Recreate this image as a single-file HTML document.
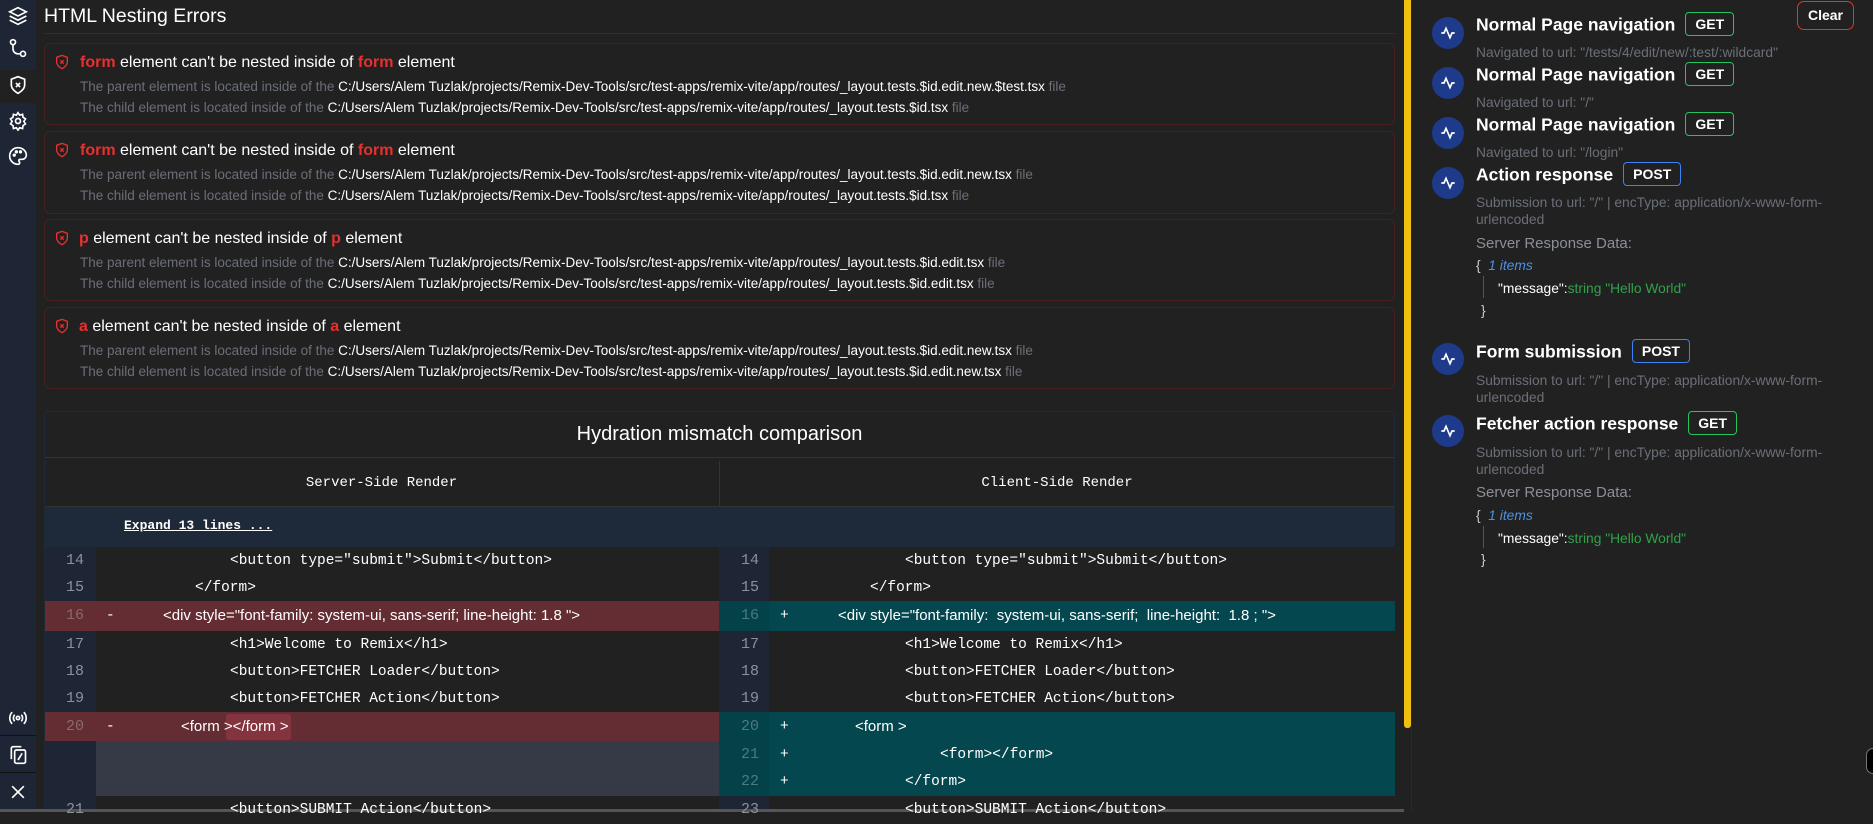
<!DOCTYPE html>
<html><head><meta charset="utf-8"><style>
*{margin:0;padding:0;box-sizing:border-box}
body{width:1873px;height:812px;background:#212121;font-family:"Liberation Sans",sans-serif;color:#fff;position:relative;overflow:hidden}
.a{position:absolute;white-space:nowrap}
.sb{position:absolute;left:0;top:0;width:36px;height:812px;background:#1e2636}
.ic{position:absolute;left:8px;width:20px;height:20px}
.card{position:absolute;left:44px;width:1351px;border:1px solid #47201f;border-radius:6px}
.h{position:absolute;left:35px;top:10px;font-size:16px;color:#fff}
.r{color:#e5312f;font-weight:bold}
.s{position:absolute;left:35px;font-size:13.5px;color:#6b6f78}
.s b{font-weight:normal;color:#fff}
.code{font-family:"Liberation Mono",monospace;font-size:14.5px;color:#fff}
.row{position:absolute;height:28px;line-height:28px}
.ln{position:absolute;font-family:"Liberation Mono",monospace;font-size:15px;color:#8b919c;text-align:right;width:40px;line-height:inherit}
.ti{position:absolute;left:1476px;font-size:17.5px;font-weight:bold;color:#fff}
.bd{display:inline-block;margin-left:10px;border:1.5px solid #22c55e;border-radius:4px;padding:3px 9px;font-size:14px;font-weight:bold;vertical-align:middle;position:relative;top:-2px}
.bp{border-color:#3b82f6}
.st{position:absolute;left:1476px;font-size:13.8px;color:#6b6f78;line-height:17px}
.cir{position:absolute;left:1432px;width:32px;height:32px;border-radius:50%;background:#1e3a8a}
.cir svg{position:absolute;left:8px;top:8px}
</style></head><body>
<div class="sb">
 <div style="position:absolute;left:0;top:70px;width:36px;height:33px;background:#212121"></div>
 <svg class="ic" style="top:6px" viewBox="0 0 24 24" fill="none" stroke="#fff" stroke-width="2"><path d="M12 2 2 7l10 5 10-5z"/><path d="m2 12 10 5 10-5"/><path d="m2 17 10 5 10-5"/></svg>
 <svg class="ic" style="top:38px" viewBox="0 0 24 24" fill="none" stroke="#fff" stroke-width="2"><circle cx="6" cy="5" r="3"/><circle cx="18" cy="19" r="3"/><path d="M6 8v5a6 6 0 0 0 6 6h3"/></svg>
 <svg class="ic" style="top:75px" viewBox="0 0 24 24" fill="none" stroke="#fff" stroke-width="2"><path d="M12 22s8-4 8-10V5l-8-3-8 3v7c0 6 8 10 8 10z"/><path d="m9.5 9.5 5 5m0-5-5 5"/></svg>
 <svg class="ic" style="top:111px" viewBox="0 0 24 24" fill="none" stroke="#fff" stroke-width="2"><circle cx="12" cy="12" r="3"/><path d="M12 2l2 3 3.5-1 .5 3.5 3 2-2 3 2 3-3 2-.5 3.5-3.5-1-2 3-2-3-3.5 1-.5-3.5-3-2 2-3-2-3 3-2 .5-3.5 3.5 1z"/></svg>
 <svg class="ic" style="top:146px" viewBox="0 0 24 24" fill="none" stroke="#fff" stroke-width="2"><path d="M12 2a10 10 0 1 0 0 20c1.5 0 2-1 2-2s-1-1.5-1-2.5 1-1.5 2-1.5h2a5 5 0 0 0 5-5c0-5-4.5-9-10-9z"/><circle cx="7.5" cy="11" r="1"/><circle cx="10" cy="7" r="1"/><circle cx="15" cy="7" r="1"/></svg>
 <svg class="ic" style="top:708px" viewBox="0 0 24 24" fill="none" stroke="#fff" stroke-width="2"><circle cx="12" cy="12" r="2"/><path d="M8 8a6 6 0 0 0 0 8M16 8a6 6 0 0 1 0 8M5 5a10 10 0 0 0 0 14M19 5a10 10 0 0 1 0 14"/></svg>
 <div style="position:absolute;left:0;top:735px;width:36px;height:1px;background:#111"></div>
 <svg class="ic" style="top:745px" viewBox="0 0 24 24" fill="none" stroke="#fff" stroke-width="2"><rect x="8" y="6" width="13" height="16" rx="2"/><path d="M4 17V4a2 2 0 0 1 2-2h10M12 18l5-8"/></svg>
 <div style="position:absolute;left:0;top:772px;width:36px;height:1px;background:#111"></div>
 <svg class="ic" style="top:782px" viewBox="0 0 24 24" fill="none" stroke="#fff" stroke-width="2"><path d="M5 5l14 14M19 5 5 19"/></svg>
</div>

<div class="a" style="left:44px;top:5px;font-size:19.5px">HTML Nesting Errors</div>
<div class="a" style="left:44px;top:33px;width:1351px;height:1px;background:#2e2e2e"></div>

<div class="card" style="top:43px;height:82px">
 <svg class="a" style="left:9px;top:9px" width="16" height="18" viewBox="0 0 24 24" fill="none" stroke="#e5312f" stroke-width="2"><path d="M12 22s8-4 8-10V5l-8-3-8 3v7c0 6 8 10 8 10z"/><path d="m9.5 9.5 5 5m0-5-5 5"/></svg>
 <div class="h"><span class="r">form</span> element can't be nested inside of <span class="r">form</span> element</div>
 <div class="s" style="top:35px">The parent element is located inside of the <b>C:/Users/Alem Tuzlak/projects/Remix-Dev-Tools/src/test-apps/remix-vite/app/routes/_layout.tests.$id.edit.new.$test.tsx</b> file</div>
 <div class="s" style="top:56px">The child element is located inside of the <b>C:/Users/Alem Tuzlak/projects/Remix-Dev-Tools/src/test-apps/remix-vite/app/routes/_layout.tests.$id.tsx</b> file</div>
</div>
<div class="card" style="top:131px;height:83px">
 <svg class="a" style="left:9px;top:9px" width="16" height="18" viewBox="0 0 24 24" fill="none" stroke="#e5312f" stroke-width="2"><path d="M12 22s8-4 8-10V5l-8-3-8 3v7c0 6 8 10 8 10z"/><path d="m9.5 9.5 5 5m0-5-5 5"/></svg>
 <div class="h"><span class="r">form</span> element can't be nested inside of <span class="r">form</span> element</div>
 <div class="s" style="top:35px">The parent element is located inside of the <b>C:/Users/Alem Tuzlak/projects/Remix-Dev-Tools/src/test-apps/remix-vite/app/routes/_layout.tests.$id.edit.new.tsx</b> file</div>
 <div class="s" style="top:56px">The child element is located inside of the <b>C:/Users/Alem Tuzlak/projects/Remix-Dev-Tools/src/test-apps/remix-vite/app/routes/_layout.tests.$id.tsx</b> file</div>
</div>
<div class="card" style="top:219px;height:82px">
 <svg class="a" style="left:9px;top:9px" width="16" height="18" viewBox="0 0 24 24" fill="none" stroke="#e5312f" stroke-width="2"><path d="M12 22s8-4 8-10V5l-8-3-8 3v7c0 6 8 10 8 10z"/><path d="m9.5 9.5 5 5m0-5-5 5"/></svg>
 <div class="h" style="left:34px"><span class="r">p</span> element can't be nested inside of <span class="r">p</span> element</div>
 <div class="s" style="top:35px">The parent element is located inside of the <b>C:/Users/Alem Tuzlak/projects/Remix-Dev-Tools/src/test-apps/remix-vite/app/routes/_layout.tests.$id.edit.tsx</b> file</div>
 <div class="s" style="top:56px">The child element is located inside of the <b>C:/Users/Alem Tuzlak/projects/Remix-Dev-Tools/src/test-apps/remix-vite/app/routes/_layout.tests.$id.edit.tsx</b> file</div>
</div>
<div class="card" style="top:307px;height:82px">
 <svg class="a" style="left:9px;top:9px" width="16" height="18" viewBox="0 0 24 24" fill="none" stroke="#e5312f" stroke-width="2"><path d="M12 22s8-4 8-10V5l-8-3-8 3v7c0 6 8 10 8 10z"/><path d="m9.5 9.5 5 5m0-5-5 5"/></svg>
 <div class="h" style="left:34px"><span class="r">a</span> element can't be nested inside of <span class="r">a</span> element</div>
 <div class="s" style="top:35px">The parent element is located inside of the <b>C:/Users/Alem Tuzlak/projects/Remix-Dev-Tools/src/test-apps/remix-vite/app/routes/_layout.tests.$id.edit.new.tsx</b> file</div>
 <div class="s" style="top:56px">The child element is located inside of the <b>C:/Users/Alem Tuzlak/projects/Remix-Dev-Tools/src/test-apps/remix-vite/app/routes/_layout.tests.$id.edit.new.tsx</b> file</div>
</div>

<!-- hydration panel -->
<div class="a" style="left:44px;top:411px;width:1351px;height:401px;border:1px solid #1e2a3a;border-bottom:none;border-radius:4px 4px 0 0"></div>
<div class="a" style="left:44px;top:423px;width:1351px;text-align:center;font-size:20px">Hydration mismatch comparison</div>
<div class="a" style="left:45px;top:457px;width:1349px;height:1px;background:#333"></div>
<div class="a" style="left:719px;top:461px;width:1px;height:45px;background:#333"></div>
<div class="a code" style="left:44px;top:475px;width:675px;text-align:center;font-size:14px">Server-Side Render</div>
<div class="a code" style="left:719px;top:475px;width:676px;text-align:center;font-size:14px">Client-Side Render</div>
<div class="a" style="left:45px;top:506px;width:1349px;height:41px;background:#1e2939;border-top:1px solid #333"></div>
<div class="a code" style="left:124px;top:518px;font-size:13px;font-weight:bold;text-decoration:underline">Expand 13 lines ...</div>

<div class="a" style="left:45px;top:547px;width:51px;height:265px;background:#1e2636"></div>
<div class="a" style="left:96px;top:547px;width:623px;height:265px;background:#212121"></div>
<div class="a" style="left:45px;top:601px;width:674px;height:30px;background:#632d33"></div>
<div class="a" style="left:45px;top:712px;width:674px;height:29px;background:#632d33"></div>
<div class="a" style="left:96px;top:741px;width:623px;height:55px;background:#363a47"></div>
<div class="a" style="left:719px;top:547px;width:50px;height:265px;background:#1e2636"></div>
<div class="a" style="left:769px;top:547px;width:626px;height:265px;background:#212121"></div>
<div class="a" style="left:719px;top:601px;width:50px;height:30px;background:#034249"></div>
<div class="a" style="left:769px;top:601px;width:626px;height:30px;background:#05474f"></div>
<div class="a" style="left:719px;top:712px;width:50px;height:84px;background:#034249"></div>
<div class="a" style="left:769px;top:712px;width:626px;height:84px;background:#05474f"></div>
<div class="a" style="left:0;top:809px;width:1404px;height:3px;background:#555"></div>

<div class="code">
<div class="row a" style="left:0;top:547px"><span class="ln" style="left:44px">14</span><span class="a" style="left:230px">&lt;button type="submit"&gt;Submit&lt;/button&gt;</span></div>
<div class="row a" style="left:0;top:574px"><span class="ln" style="left:44px">15</span><span class="a" style="left:195px">&lt;/form&gt;</span></div>
<div class="row a" style="left:0;top:602px"><span class="ln" style="left:44px;color:#8a6a6e">16</span><span class="a" style="left:106px">-</span><span class="a" style="left:163px;font-family:'Liberation Sans',sans-serif;font-size:15px">&lt;div style="font-family: system-ui, sans-serif; line-height: 1.8 "&gt;</span></div>
<div class="row a" style="left:0;top:631px"><span class="ln" style="left:44px">17</span><span class="a" style="left:230px">&lt;h1&gt;Welcome to Remix&lt;/h1&gt;</span></div>
<div class="row a" style="left:0;top:658px"><span class="ln" style="left:44px">18</span><span class="a" style="left:230px">&lt;button&gt;FETCHER Loader&lt;/button&gt;</span></div>
<div class="row a" style="left:0;top:685px"><span class="ln" style="left:44px">19</span><span class="a" style="left:230px">&lt;button&gt;FETCHER Action&lt;/button&gt;</span></div>
<div class="row a" style="left:0;top:713px"><span class="ln" style="left:44px;color:#8a6a6e">20</span><span class="a" style="left:106px">-</span><span class="a" style="left:226px;top:1px;width:65px;height:26px;background:#83343f;border-radius:3px"></span><span class="a" style="left:181px;font-family:'Liberation Sans',sans-serif;font-size:15px">&lt;form &gt;&lt;/form &gt;</span></div>
<div class="row a" style="left:0;top:796px"><span class="ln" style="left:44px">21</span><span class="a" style="left:230px">&lt;button&gt;SUBMIT Action&lt;/button&gt;</span></div>
<div class="row a" style="left:0;top:547px"><span class="ln" style="left:719px">14</span><span class="a" style="left:905px">&lt;button type="submit"&gt;Submit&lt;/button&gt;</span></div>
<div class="row a" style="left:0;top:574px"><span class="ln" style="left:719px">15</span><span class="a" style="left:870px">&lt;/form&gt;</span></div>
<div class="row a" style="left:0;top:602px"><span class="ln" style="left:719px;color:#4d7a80">16</span><span class="a" style="left:780px">+</span><span class="a" style="left:838px;font-family:'Liberation Sans',sans-serif;font-size:15px">&lt;div style="font-family:&nbsp; system-ui, sans-serif;&nbsp; line-height:&nbsp; 1.8 ; "&gt;</span></div>
<div class="row a" style="left:0;top:631px"><span class="ln" style="left:719px">17</span><span class="a" style="left:905px">&lt;h1&gt;Welcome to Remix&lt;/h1&gt;</span></div>
<div class="row a" style="left:0;top:658px"><span class="ln" style="left:719px">18</span><span class="a" style="left:905px">&lt;button&gt;FETCHER Loader&lt;/button&gt;</span></div>
<div class="row a" style="left:0;top:685px"><span class="ln" style="left:719px">19</span><span class="a" style="left:905px">&lt;button&gt;FETCHER Action&lt;/button&gt;</span></div>
<div class="row a" style="left:0;top:713px"><span class="ln" style="left:719px;color:#4d7a80">20</span><span class="a" style="left:780px">+</span><span class="a" style="left:855px;font-family:'Liberation Sans',sans-serif;font-size:15px">&lt;form &gt;</span></div>
<div class="row a" style="left:0;top:741px"><span class="ln" style="left:719px;color:#4d7a80">21</span><span class="a" style="left:780px">+</span><span class="a" style="left:940px">&lt;form&gt;&lt;/form&gt;</span></div>
<div class="row a" style="left:0;top:768px"><span class="ln" style="left:719px;color:#4d7a80">22</span><span class="a" style="left:780px">+</span><span class="a" style="left:905px">&lt;/form&gt;</span></div>
<div class="row a" style="left:0;top:796px"><span class="ln" style="left:719px">23</span><span class="a" style="left:905px">&lt;button&gt;SUBMIT Action&lt;/button&gt;</span></div>
</div>

<div class="a" style="left:1404px;top:0;width:7px;height:728px;background:#f0c010;border-radius:0 0 3px 3px"></div>
<div class="a" style="left:1411px;top:0;width:462px;height:812px;background:#212121;border-left:1px solid #2a2a2a"></div>
<div class="a" style="left:1797px;top:1px;width:57px;height:29px;border:1.5px solid #dc3535;border-radius:7px;font-size:14px;font-weight:bold;text-align:center;line-height:26px">Clear</div>

<div class="cir" style="top:17px"><svg width="16" height="16" viewBox="0 0 24 24" fill="none" stroke="#fff" stroke-width="2.5"><path d="M2 12h4l3-7 6 14 3-7h4"/></svg></div>
<div class="ti" style="top:14px">Normal Page navigation<span class="bd">GET</span></div>
<div class="st" style="top:44px">Navigated to url: "/tests/4/edit/new/:test/:wildcard"</div>
<div class="cir" style="top:67px"><svg width="16" height="16" viewBox="0 0 24 24" fill="none" stroke="#fff" stroke-width="2.5"><path d="M2 12h4l3-7 6 14 3-7h4"/></svg></div>
<div class="ti" style="top:64px">Normal Page navigation<span class="bd">GET</span></div>
<div class="st" style="top:94px">Navigated to url: "/"</div>
<div class="cir" style="top:117px"><svg width="16" height="16" viewBox="0 0 24 24" fill="none" stroke="#fff" stroke-width="2.5"><path d="M2 12h4l3-7 6 14 3-7h4"/></svg></div>
<div class="ti" style="top:114px">Normal Page navigation<span class="bd">GET</span></div>
<div class="st" style="top:144px">Navigated to url: "/login"</div>
<div class="cir" style="top:167px"><svg width="16" height="16" viewBox="0 0 24 24" fill="none" stroke="#fff" stroke-width="2.5"><path d="M2 12h4l3-7 6 14 3-7h4"/></svg></div>
<div class="ti" style="top:164px">Action response<span class="bd bp">POST</span></div>
<div class="st" style="top:194px">Submission to url: "/" | encType: application/x-www-form-<br>urlencoded</div>
<div class="st" style="top:235px;font-size:15px;color:#8b8f98">Server Response Data:</div>
<div class="st" style="top:257px;color:#ccc">{ &nbsp;<i style="color:#4f8fe0">1 items</i></div>
<div class="a" style="left:1483px;top:276px;width:1px;height:22px;background:#555"></div>
<div class="st" style="top:280px;left:1498px;color:#fff">"message":<span style="color:#2fa34a">string "Hello World"</span></div>
<div class="st" style="top:302px;left:1481px;color:#ccc">}</div>

<div class="cir" style="top:343px"><svg width="16" height="16" viewBox="0 0 24 24" fill="none" stroke="#fff" stroke-width="2.5"><path d="M2 12h4l3-7 6 14 3-7h4"/></svg></div>
<div class="ti" style="top:341px">Form submission<span class="bd bp">POST</span></div>
<div class="st" style="top:372px">Submission to url: "/" | encType: application/x-www-form-<br>urlencoded</div>
<div class="cir" style="top:415px"><svg width="16" height="16" viewBox="0 0 24 24" fill="none" stroke="#fff" stroke-width="2.5"><path d="M2 12h4l3-7 6 14 3-7h4"/></svg></div>
<div class="ti" style="top:413px">Fetcher action response<span class="bd">GET</span></div>
<div class="st" style="top:444px">Submission to url: "/" | encType: application/x-www-form-<br>urlencoded</div>
<div class="st" style="top:484px;font-size:15px;color:#8b8f98">Server Response Data:</div>
<div class="st" style="top:507px;color:#ccc">{ &nbsp;<i style="color:#4f8fe0">1 items</i></div>
<div class="a" style="left:1483px;top:526px;width:1px;height:22px;background:#555"></div>
<div class="st" style="top:530px;left:1498px;color:#fff">"message":<span style="color:#2fa34a">string "Hello World"</span></div>
<div class="st" style="top:551px;left:1481px;color:#ccc">}</div>

<div class="a" style="left:1866px;top:748px;width:14px;height:26px;border-radius:13px;background:#000;border:1px solid #777"></div>
</body></html>
